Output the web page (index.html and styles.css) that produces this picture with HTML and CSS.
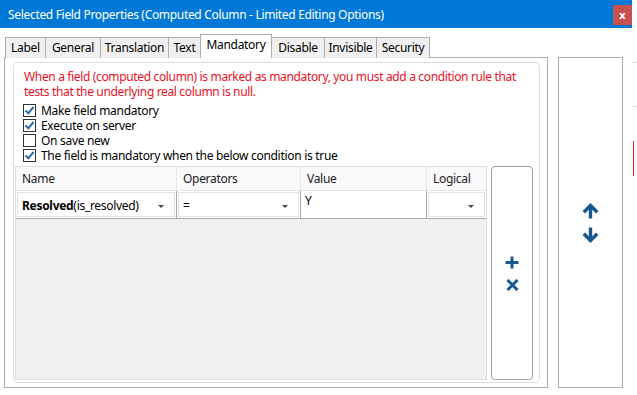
FILE: index.html
```html
<!DOCTYPE html>
<html lang="en">

<head>
  <meta charset="UTF-8">
  <meta name="viewport" content="width=device-width, initial-scale=1.0">
  <title>Selected Field Properties</title>
  <link rel="stylesheet" href="styles.css">
</head>

<body>
  <div class="titlebar">
    <span class="title">Selected Field Properties (Computed Column - Limited Editing Options)</span>
    <button class="close">x</button>
  </div>

  <div class="window">
    <!-- Left: tabs -->
    <div class="tabs-col">
      <div class="tabstrip">
        <div class="tab tab-label">Label</div>
        <div class="tab tab-general">General</div>
        <div class="tab tab-translation">Translation</div>
        <div class="tab tab-text">Text</div>
        <div class="tab tab-mandatory active">Mandatory</div>
        <div class="tab tab-disable">Disable</div>
        <div class="tab tab-invisible">Invisible</div>
        <div class="tab tab-security">Security</div>
      </div>

      <div class="panel">
        <div class="group">
          <div class="intro">
            <p class="warning">When a field (computed column) is marked as mandatory, you must add a condition rule that
              tests that the underlying real column is null.</p>
            <label class="check"><span class="box checked"></span>Make field mandatory</label>
            <label class="check"><span class="box checked"></span>Execute on server</label>
            <label class="check"><span class="box"></span>On save new</label>
            <label class="check"><span class="box checked"></span>The field is mandatory when the below condition is true</label>
          </div>

          <div class="rules">
            <div class="grid">
              <div class="grid-row grid-head">
                <div class="cell c-name">Name</div>
                <div class="cell c-op">Operators</div>
                <div class="cell c-value">Value</div>
                <div class="cell c-logic">Logical</div>
              </div>
              <div class="grid-row grid-data">
                <div class="cell c-name">
                  <div class="combo"><span><b>Resolved</b>(is_resolved)</span><i class="caret"></i></div>
                </div>
                <div class="cell c-op">
                  <div class="combo"><span>=</span><i class="caret"></i></div>
                </div>
                <div class="cell c-value value-text">Y</div>
                <div class="cell c-logic">
                  <div class="combo"><span></span><i class="caret"></i></div>
                </div>
              </div>
              <div class="grid-empty"></div>
            </div>

            <div class="rule-buttons">
              <svg width="14" height="13" viewBox="0 0 14 13">
                <path d="M7 0.5V12.5M0.5 6.5H13.5" stroke="#17598f" stroke-width="3" fill="none" />
              </svg>
              <svg width="13" height="12" viewBox="0 0 13 12">
                <path d="M1.5 1L11.5 11M11.5 1L1.5 11" stroke="#17598f" stroke-width="3" fill="none" />
              </svg>
            </div>
          </div>
        </div>
      </div>
    </div>

    <!-- Right: order buttons -->
    <div class="side-col">
      <svg width="17" height="16" viewBox="0 0 17 16">
        <path d="M8.5 15.5V3M1.8 9.3L8.5 2.5L15.2 9.3" stroke="#17598f" stroke-width="3.4" fill="none" />
      </svg>
      <svg width="17" height="16" viewBox="0 0 17 16">
        <path d="M8.5 0.5V13M1.8 6.7L8.5 13.5L15.2 6.7" stroke="#17598f" stroke-width="3.4" fill="none" />
      </svg>
    </div>
  </div>

  <div class="behind">
    <div class="behind-line line-a"></div>
    <div class="behind-line line-b"></div>
    <div class="behind-red"></div>
  </div>
</body>

</html>
```

FILE: styles.css
```css
body {
  margin: 0;
  background: #fff;
  font-family: "Noto Sans", "Open Sans", sans-serif;
  font-size: 12px;
  color: #000;
  width: 637px;
  height: 395px;
  overflow: hidden;
  position: relative;
}

.titlebar {
  width: 632px;
  height: 28px;
  background: #0078d7;
  color: #fff;
  display: flex;
  align-items: center;
  justify-content: space-between;
  box-sizing: border-box;
  padding-left: 8px;
}

.title {
  font-size: 12px;
  letter-spacing: -0.32px;
}

.close {
  width: 19px;
  height: 20px;
  margin-top: 2px;
  background: #c75050;
  color: #fff;
  border: none;
  padding: 0;
  font-family: "Noto Sans", sans-serif;
  font-size: 11px;
  font-weight: bold;
  line-height: 18px;
}

.window {
  display: flex;
  padding: 5px 0 0 4px;
}

.tabs-col {
  width: 544px;
}

.tabstrip {
  display: flex;
  align-items: flex-end;
  height: 24px;
  padding-left: 1px;
  position: relative;
  z-index: 1;
}

.tab {
  box-sizing: border-box;
  height: 21px;
  margin-bottom: -1px;
  border: 1px solid #adadad;
  border-bottom: none;
  border-right: none;
  background: #f0f0f0;
  text-align: center;
  line-height: 20px;
  letter-spacing: -0.3px;
}

.tab-label { width: 40px; }
.tab-general { width: 55px; }
.tab-translation { width: 68px; }
.tab-text { width: 32px; }
.tab-mandatory { width: 72px; }
.tab-disable { width: 52px; }
.tab-invisible { width: 52px; }
.tab-security { width: 54px; border-right: 1px solid #adadad; }

.tab.active {
  height: 24px;
  margin-bottom: -1px;
  background: #fff;
  border-right: 1px solid #adadad;
  line-height: 20px;
}

.tab.active + .tab {
  border-left: none;
}

.panel {
  box-sizing: border-box;
  height: 331px;
  border: 1px solid #adadad;
  padding: 4px 7px 4px 8px;
  display: flex;
}

.group {
  flex: 1;
  border: 1px solid #dcdcdc;
  border-radius: 5px;
  padding: 6px 6px 2px 1px;
  display: flex;
  flex-direction: column;
}

.intro {
  padding-left: 8px;
}

.warning {
  margin: 0 0 4px 1px;
  color: #e8111f;
  line-height: 15px;
  letter-spacing: -0.35px;
}

.check {
  display: flex;
  align-items: center;
  height: 15px;
  line-height: 15px;
  letter-spacing: -0.3px;
}

.box {
  box-sizing: border-box;
  width: 13px;
  height: 13px;
  border: 1px solid #333;
  margin-right: 5px;
  background: #fff;
  position: relative;
}

.box.checked::after {
  content: "";
  position: absolute;
  left: 3px;
  top: 0px;
  width: 3px;
  height: 7px;
  border: solid #2b6ca3;
  border-width: 0 2px 2px 0;
  transform: rotate(40deg);
}

.rules {
  flex: 1;
  display: flex;
  gap: 4px;
  margin-top: 3px;
}

.grid {
  box-sizing: border-box;
  width: 472px;
  border: 1px solid #dedede;
  display: flex;
  flex-direction: column;
  background: #f0f0f0;
}

.grid-row {
  display: flex;
  background: #fff;
}

.grid-head {
  height: 23px;
  background: #f9f9f9;
  border-bottom: 1px solid #e2e2e2;
}

.grid-head .cell {
  border-right: 1px solid #e6e6e6;
  padding-left: 6px;
  line-height: 24px;
  color: #222;
}

.cell {
  box-sizing: border-box;
  letter-spacing: -0.3px;
}

.c-name { width: 161px; }
.c-op { width: 124px; }
.c-value { width: 126px; }
.c-logic { width: 59px; border-right: none !important; }

.grid-data {
  height: 27px;
  border-bottom: 1px solid #a9a9a9;
}

.grid-data .cell {
  border-right: 1px solid #a9a9a9;
  padding: 1px;
}

.combo {
  box-sizing: border-box;
  height: 25px;
  border: 1px solid #e3e3e3;
  display: flex;
  align-items: center;
  justify-content: space-between;
  padding: 1px 10px 0 4px;
}

.caret {
  width: 0;
  height: 0;
  border-left: 3px solid transparent;
  border-right: 3px solid transparent;
  border-top: 3px solid #444;
  margin-top: 2px;
}

.value-text {
  padding: 0 4px !important;
  line-height: 20px;
}

.grid-empty {
  flex: 1;
}

.rule-buttons {
  box-sizing: border-box;
  width: 42px;
  border: 1px solid #a0a0a0;
  border-radius: 4px;
  display: flex;
  flex-direction: column;
  align-items: center;
  justify-content: center;
  gap: 10px;
}

.side-col {
  box-sizing: border-box;
  width: 65px;
  height: 331px;
  margin-top: 24px;
  margin-left: 10px;
  border: 1px solid #adadad;
  display: flex;
  flex-direction: column;
  align-items: center;
  justify-content: center;
  gap: 8px;
}

/* bits of the window behind the dialog */
.behind-line {
  position: absolute;
  left: 633px;
  width: 4px;
  height: 1px;
  background: #dadada;
}

.line-a { top: 62px; }
.line-b { top: 106px; }

.behind-red {
  position: absolute;
  left: 633px;
  top: 141px;
  width: 1px;
  height: 35px;
  background: #e02020;
}
```
